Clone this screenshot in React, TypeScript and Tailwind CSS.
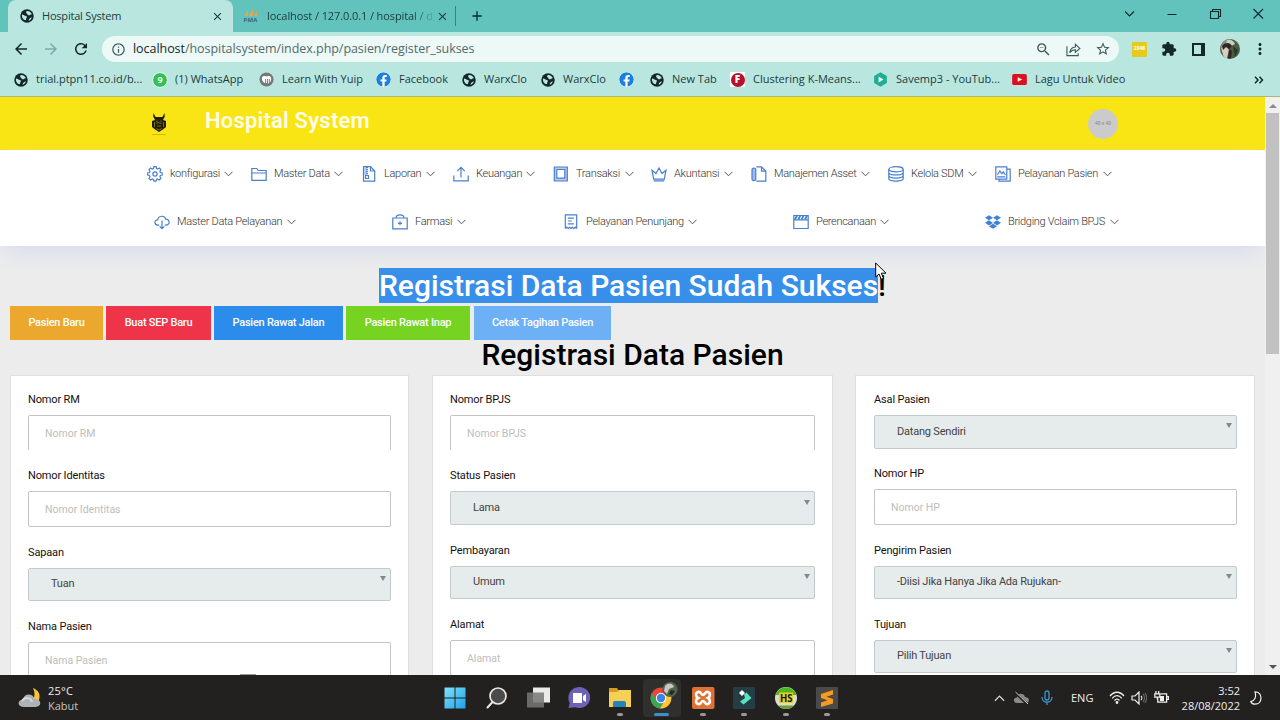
import React from 'react';
import { FaDropbox, FaFacebook } from 'react-icons/fa';
import { MdExtension, MdArrowBack, MdArrowForward, MdRefresh, MdInfoOutline, MdStarBorder, MdZoomOut, MdMoreVert, MdClose, MdAdd } from 'react-icons/md';

const Globe = () => (
  <svg viewBox="0 0 16 16" className="w-[14px] h-[14px] shrink-0">
    <circle cx="8" cy="8" r="7.7" fill="#15262a" />
    <path d="M2.2 6.2c2.2.2 3 1.5 4.6 1.7 1 .2 1.5.9.8 1.8-.7.8-.2 2.4-1.2 3.2-2.6-.6-4.6-3.2-4.2-6.7ZM8 2.2c2.4-.3 4.7 1.2 5.6 3.8-.8-.4-1.5.1-2.1.8-1 .9-3.1.3-3-.8.1-.9-1.4-.8-1.6-1.8-.1-.9.3-1.5 1.1-2ZM13.6 9.8c-.7 1.8-2 3-3.6 3.6-.2-1.2.7-1.7 1.3-2.7.5-.8 1.6-1 2.3-.9Z" fill="#b9e7e0" />
  </svg>
);

const Chevron = () => (
  <svg viewBox="0 0 9 6" className="w-[9px] h-[6px] shrink-0" fill="none" stroke="#555" strokeWidth="1">
    <path d="M.5 .8 4.5 4.8 8.5 .8" />
  </svg>
);

// line icons of the menu, all on a 16px grid
const shapes: Record<string, React.ReactNode> = {
  gear: (
    <>
      <path d="M6.9 .7h2.2l.4 1.8 1.2.5 1.6-1 1.6 1.6-1 1.6.5 1.3 1.8.4v2.2l-1.8.4-.5 1.2 1 1.6-1.6 1.6-1.6-1-1.2.5-.4 1.8H6.9l-.4-1.8-1.3-.5-1.6 1L2 12.3l1-1.6-.5-1.2-1.8-.4V6.9l1.8-.4L3 5.2 2 3.6 3.6 2l1.6 1 1.3-.5Z" />
      <circle cx="8" cy="8" r="2.1" />
    </>
  ),
  folder: <path d="M.8 14.3V2.5h5l1.4 2h8v9.8ZM.8 7h14.4" />,
  zip: (
    <>
      <path d="M2.5.7h7L13.7 5v10.2H2.5ZM9.5.7V5h4.2" />
      <path d="M3 1h3.500v8H3z" fill="#b5caf0" stroke="none" />
      <path d="M5 1.5h2M5 3.5h2M5 5.5h2M5 7.5h2M4.5 9.5h3v3h-3z" />
    </>
  ),
  upload: <path d="M.8 9.5v5.3h14.4V9.5M8 11.5V1.5M4.2 5.2 8 1.4l3.8 3.8" />,
  frame: (
    <>
      <path d="M1.3 1h13v14h-13z" fill="#b5caf0" />
      <path d="M3.8 3.5h8v8.700h-8z" fill="#fff" />
    </>
  ),
  crown: <path d="M2.7 13.2 1 4.2l4 3.3L8 2l3 5.5 4-3.3-1.7 9ZM2.7 14.8h10.6" />,
  files: (
    <>
      <path d="M5.3.8h5.2l4.3 4.3v10H5.3M10.5.8v4.3h4.3" />
      <path d="M1 3.5C1 1.5 4.8 1.5 4.8 3.5v9.7c0 2-3.8 2-3.8 0Z" fill="#9db9ee" />
    </>
  ),
  stack: (
    <>
      <ellipse cx="8" cy="3.3" rx="7.2" ry="2.6" />
      <path d="M.8 3.3v9.3c0 3.400 14.400 3.400 14.400 0V3.300M.8 6.400c0 3.400 14.400 3.400 14.400 0M.8 9.500c0 3.400 14.400 3.400 14.400 0" />
    </>
  ),
  image: <path d="M.8.8h11v12.400H.8ZM11.800 3.200h3.400v12H4v-2M2.300 10.800h8M2.500 9l2.300-4.200 2 3 1.500-2L10.500 9" />,
  cloud: <path d="M5.2 11.2H3.7C-.1 10.7.2 5.7 3.7 5.9 4.2 1.6 10.5.8 11.7 5.1c4.5-.2 4.6 6.1.2 6.1h-1.2M8 6.5v8.2M5.7 12.4 8 14.7l2.3-2.3" />,
  kit: <path d="M.8 4h14.4v10.8H.8ZM4 3.8C4.3-.1 11.7-.1 12 3.8M8 7.3v4M6 9.3h4" />,
  bill: <path d="M2.300 14.500V.8h11.400v13.700M2.300 14.500l1.400-1.300 1.500 1.500 1.400-1.500L8 14.700l1.400-1.500 1.400 1.500 1.500-1.500 1.400 1.300M4.800 4.200h6M4.800 7h4M4.800 9.800h6" />,
  clap: (
    <>
      <path d="M.8 1.5h14.4v13H.8ZM.8 5.900h14.400" />
      <path d="m2 5.5 2-4M5.300 5.500l2-4M8.600 5.500l2-4M12 5.500l2-4" strokeWidth="1.800" />
    </>
  ),
};

const MenuIcon = ({ name }: { name: string }) => {
  if (name === 'dropbox') return <FaDropbox className="w-4 h-4 text-[#3f83d8] shrink-0" />;
  return (
    <svg viewBox="0 0 16 16" className="w-4 h-4 shrink-0" fill="none" stroke="#4a7fcb" strokeWidth="1.2">
      {shapes[name]}
    </svg>
  );
};

const menuTop = [
  { label: 'konfigurasi', icon: 'gear', box: 'w-[104px]', text: 'w-[54px]' },
  { label: 'Master Data', icon: 'folder', box: 'w-[110px]', text: 'w-[60px]' },
  { label: 'Laporan', icon: 'zip', box: 'w-[92px]', text: 'w-[42px]' },
  { label: 'Keuangan', icon: 'upload', box: 'w-[100px]', text: 'w-[50px]' },
  { label: 'Transaksi', icon: 'frame', box: 'w-[98px]', text: 'w-[49px]' },
  { label: 'Akuntansi', icon: 'crown', box: 'w-[100px]', text: 'w-[50px]' },
  { label: 'Manajemen Asset', icon: 'files', box: 'w-[137px]', text: 'w-[87px]' },
  { label: 'Kelola SDM', icon: 'stack', box: 'w-[107px]', text: 'w-[57px]' },
  { label: 'Pelayanan Pasien', icon: 'image', box: 'w-[124px]', text: 'w-[85px]' },
];

const menuBottom = [
  { label: 'Master Data Pelayanan', icon: 'cloud', box: 'w-[238px]', text: 'w-[110px]' },
  { label: 'Farmasi', icon: 'kit', box: 'w-[171px]', text: 'w-[42px]' },
  { label: 'Pelayanan Penunjang', icon: 'bill', box: 'w-[230px]', text: 'w-[102px]' },
  { label: 'Perencanaan', icon: 'clap', box: 'w-[192px]', text: 'w-[64px]' },
  { label: 'Bridging Vclaim BPJS', icon: 'dropbox', box: 'w-[134px]', text: 'w-[102px]' },
];

type MenuEntry = { label: string; icon: string; box: string; text: string };

function MenuRow({ items }: { items: MenuEntry[] }) {
  return (
    <>
      {items.map((m) => (
        <div key={m.label} className={`flex items-center shrink-0 ${m.box}`}>
          <MenuIcon name={m.icon} />
          <span className={`ml-[7px] shrink-0 pt-px whitespace-nowrap text-[11px] font-light tracking-[-0.3px] text-[#333] ${m.text}`}>{m.label}</span>
          <Chevron />
        </div>
      ))}
    </>
  );
}

const bookmarks = [
  { label: 'trial.ptpn11.co.id/b...', icon: <Globe />, box: 'w-[139px]' },
  {
    label: '(1) WhatsApp',
    icon: (
      <span className="w-[14px] h-[14px] rounded-full bg-[#2fc350] text-white text-[9px] font-bold flex items-center justify-center outline-1 outline-[#d8f5e2] shrink-0">9</span>
    ),
    box: 'w-[106px]',
  },
  {
    label: 'Learn With Yuip',
    icon: (
      <svg viewBox="0 0 16 16" className="w-[15px] h-[15px] shrink-0">
        <circle cx="8" cy="8" r="7.5" fill="#777" />
        <path d="M3 6.5C4 3 7 4.5 8 4.5S12.500 3 13 7c0 2-.5 3-1.500 4.500V7.500h-1V12h-1V7.500h-1V12h-1V7.500h-1V12C4 11 3 9 3 6.500Z" fill="#fff" />
      </svg>
    ),
    box: 'w-[117px]',
  },
  { label: 'Facebook', icon: <FaFacebook className="w-[15px] h-[15px] text-[#1b7fdc] bg-white rounded-full shrink-0" />, box: 'w-[86px]' },
  { label: 'WarxClo', icon: <Globe />, box: 'w-[79px]' },
  { label: 'WarxClo', icon: <Globe />, box: 'w-[78px]' },
  { label: '', icon: <FaFacebook className="w-[15px] h-[15px] text-[#1b7fdc] bg-white rounded-full shrink-0" />, box: 'w-[31px]' },
  { label: 'New Tab', icon: <Globe />, box: 'w-[80px]' },
  {
    label: 'Clustering K-Means...',
    icon: (
      <span className="w-[15px] h-[15px] bg-white flex items-center justify-center shrink-0">
        <span className="w-[14px] h-[14px] rounded-full bg-[#b5122b] text-white text-[10px] font-extrabold flex items-center justify-center">F</span>
      </span>
    ),
    box: 'w-[143px]',
  },
  {
    label: 'Savemp3 - YouTub...',
    icon: (
      <svg viewBox="0 0 16 16" className="w-[15px] h-[15px] shrink-0">
        <path d="m8 .3 6.800 3.900v7.600L8 15.700l-6.800-3.900V4.200Z" fill="#1fae90" />
        <path d="m6 4.800 5 3.200-5 3.200Z" fill="#fff" />
      </svg>
    ),
    box: 'w-[139px]',
  },
  {
    label: 'Lagu Untuk Video',
    icon: (
      <svg viewBox="0 0 16 12" className="w-[15px] h-[11px] shrink-0">
        <rect width="16" height="12" rx="2" fill="#dd1021" />
        <path d="m6 3.500 5 2.500-5 2.500Z" fill="#fff" />
      </svg>
    ),
    box: 'w-[120px]',
  },
];

function BrowserChrome() {
  return (
    <div className="font-['Open_Sans','Noto_Sans',sans-serif] text-[#1c3a3c] shrink-0">
      <div className="h-8 bg-[#62c2bc] flex items-stretch pl-2">
        <div className="w-[225px] rounded-t-lg bg-[#b9e7e0] flex items-center pl-3 pr-[9px]">
          <Globe />
          <span className="ml-[8px] text-[11px] tracking-[-0.2px] flex-1 whitespace-nowrap">Hospital System</span>
          <MdClose className="w-[13px] h-[13px]" />
        </div>
        <div className="w-[224px] flex items-center pl-[10px]">
          <svg viewBox="0 0 16 16" className="w-4 h-4 shrink-0">
            <path d="M1 8 5 2v6ZM6 8 10 0v8ZM11 8l3-5v5Z" fill="#e3a84e" />
            <text x="0.500" y="14" fontSize="6" fontWeight="bold" fill="#46617c" textLength="14">PMA</text>
          </svg>
          <span className="ml-[8px] w-[168px] text-[11px] tracking-[-0.1px] whitespace-nowrap [mask-image:linear-gradient(to_right,black_145px,transparent_170px)]">localhost / 127.0.0.1 / hospital / d</span>
          <MdClose className="ml-[1px] w-[13px] h-[13px] shrink-0" />
          <span className="ml-[6px] h-[20px] border-l border-[#2f8580]" />
        </div>
        <MdAdd className="w-4 h-4 mt-2 ml-[12px] text-[#0e2a2c]" />
        <svg viewBox="0 0 140 14" className="ml-auto mr-[15px] mt-[7px] w-[140px] h-[14px]" fill="none" stroke="#0e2a2c" strokeWidth="1.100">
          <path d="m0 4.500 4.500 4.500 4.500-4.500M42.500 7.500h9M85.500 4.500h8v7h-8ZM87.500 4.500v-2h8v7h-2M128.500 2l9.500 9.500M138 2l-9.500 9.500" />
        </svg>
      </div>
      <div className="h-[34px] bg-[#b9e7e0] flex items-center">
        <MdArrowBack className="ml-3 w-[18px] h-[18px] text-[#14282a]" />
        <MdArrowForward className="ml-3 w-[18px] h-[18px] text-[#7fa9a5]" />
        <MdRefresh className="ml-3 w-[18px] h-[18px] text-[#14282a]" />
        <div className="ml-3 w-[1017px] h-[26px] rounded-full bg-[#edf9f7] flex items-center pl-[9px] text-[#3f5a5c]">
          <MdInfoOutline className="w-[15px] h-[15px]" />
          <span className="ml-[7px] pt-px text-[12.500px] tracking-[-0.05px] whitespace-nowrap text-[#526b6b] flex-1">
            <span className="text-[#12282a]">localhost</span>/hospitalsystem/index.php/pasien/register_sukses
          </span>
          <MdZoomOut className="w-[17px] h-[17px]" />
          <svg viewBox="0 0 16 16" className="ml-[14px] w-[15px] h-[15px]" fill="none" stroke="currentColor" strokeWidth="1.200">
            <path d="M1 4.500v10h12v-2.500M4 11.500C4.500 7.500 7 5.500 10 5.300V2.500l4.800 4.300L10 11V8.300c-2.500 0-4.500 1-6 3.200Z" />
          </svg>
          <MdStarBorder className="ml-[14px] mr-[8px] w-[16px] h-[16px]" />
        </div>
        <span className="ml-[13px] w-[15px] h-[15px] rounded-[1px] bg-[#e6cb1b] text-white text-[5px] font-bold flex items-center justify-center">2048</span>
        <MdExtension className="ml-[14px] w-4 h-4 text-[#14282a]" />
        <span className="ml-[15px] w-[13px] h-[13px] border-2 border-r-4 border-[#14282a]" />
        <svg viewBox="0 0 20 20" className="ml-[15px] w-5 h-5">
          <clipPath id="face"><circle cx="10" cy="10" r="10" /></clipPath>
          <g clipPath="url(#face)">
            <rect width="20" height="20" fill="#4c5c42" />
            <path d="M0 0h11L8 7 0 9Z" fill="#8f8a7c" />
            <path d="M1 9l5-2 3 4-2 8H4Z" fill="#d8ccc3" />
            <path d="M7 1c4-1 7 1 8 4l-6 3-4-1Z" fill="#c9d0bd" />
            <path d="M2 7c3-4 8-4 10 0l-3 3-3-2-3 3ZM9 10l3 2-1 7-3 1Z" fill="#2c2824" />
            <path d="M13 7l5 4-3 7Z" fill="#273c20" />
          </g>
        </svg>
        <MdMoreVert className="ml-[11px] w-[18px] h-[18px] text-[#14282a]" />
      </div>
      <div className="h-[30px] bg-[#b9e7e0] flex items-center pl-[14px] pb-[3px] text-[11px]">
        {bookmarks.map((b, i) => (
          <div key={i} className={`flex items-center gap-[8px] shrink-0 whitespace-nowrap ${b.box}`}>
            {b.icon}
            {b.label && <span>{b.label}</span>}
          </div>
        ))}
        <svg viewBox="0 0 10 8" className="ml-auto mr-[16px] w-[10px] h-[8px]" fill="none" stroke="#14282a" strokeWidth="1.500">
          <path d="m1 .8 3 3.200-3 3.200M5.500.8l3 3.200-3 3.200" />
        </svg>
      </div>
      <div className="h-px bg-[#a9b878]" />
    </div>
  );
}

const buttons = [
  { label: 'Pasien Baru', style: 'bg-[#eca72f] w-[93px]' },
  { label: 'Buat SEP Baru', style: 'bg-[#ef344a] w-[105px]' },
  { label: 'Pasien Rawat Jalan', style: 'bg-[#2c8cec] w-[129px]' },
  { label: 'Pasien Rawat Inap', style: 'bg-[#76d322] w-[124px]' },
  { label: 'Cetak Tagihan Pasien', style: 'bg-[#6db0f6] w-[137px] ml-px' },
];

const columns = [
  {
    box: 'w-[399px] pl-[17px] mr-px',
    fields: [
      { label: 'Nomor RM', placeholder: 'Nomor RM', open: true },
      { label: 'Nomor Identitas', placeholder: 'Nomor Identitas' },
      { label: 'Sapaan', value: 'Tuan' },
      { label: 'Nama Pasien', placeholder: 'Nama Pasien' },
    ],
  },
  {
    box: 'w-[401px] pl-[17px]',
    fields: [
      { label: 'Nomor BPJS', placeholder: 'Nomor BPJS', open: true },
      { label: 'Status Pasien', value: 'Lama' },
      { label: 'Pembayaran', value: 'Umum' },
      { label: 'Alamat', placeholder: 'Alamat' },
    ],
  },
  {
    box: 'w-[400px] pl-[18px]',
    fields: [
      { label: 'Asal Pasien', value: 'Datang Sendiri' },
      { label: 'Nomor HP', placeholder: 'Nomor HP' },
      { label: 'Pengirim Pasien', value: '-Diisi Jika Hanya Jika Ada Rujukan-' },
      { label: 'Tujuan', value: 'Pilih Tujuan' },
    ],
  },
];

type FieldData = { label: string; placeholder?: string; value?: string; open?: boolean };

function Field({ label, placeholder, value, open }: FieldData) {
  return (
    <div className={value ? 'h-[74.300px]' : 'h-[76.400px]'}>
      <div className="h-[17px] leading-[18px] mb-[7px] text-[11px] text-[#111] tracking-[-0.150px]">{label}</div>
      {value ? (
        <div className="h-[33.500px] rounded-[2px] border border-[#c3cacb] bg-[#e6ebeb] flex items-center pl-[22px] pr-[4px] text-[11px] tracking-[-0.200px] text-[#444]">
          <span className="flex-1">{value}</span>
          <span className="border-x-[3px] border-t-[5px] border-x-transparent border-t-[#888] mb-3" />
        </div>
      ) : (
        <div className={`h-9 rounded-[2px] border border-[#c4c4c4] flex items-center pt-px pl-4 text-[10.500px] text-[#bdbdbd] ${open ? 'border-b-white' : ''}`}>
          {placeholder}
        </div>
      )}
    </div>
  );
}

function HospitalPage() {
  return (
    <div className="w-[1265px] bg-[#ececec] font-[Roboto,sans-serif] overflow-hidden">
      <header className="h-[53px] bg-[#f9e414] flex items-center">
        <svg viewBox="0 0 16 24" className="ml-[151px] w-4 h-6">
          <path d="M2.500 1 4.500 5h7l2-4 .3 3.500L12 8l3 1v6l-2.500 2L8 20l-4.500-3L1 15V9l3-1-1.800-3.500Z" fill="#1f1c08" />
          <path d="M3.500 10v5M12.500 10v5M6 8.500v2M10 8.500v2M5.500 12l2-2 2 2 1-1M6 14h4M5.500 16.500l2.500 1.500 2.500-1.500" stroke="#a8980f" strokeWidth=".7" fill="none" />
          <path d="M1.500 22.500h13" stroke="#a08f12" strokeDasharray="1 1" />
        </svg>
        <span className="ml-[38px] mb-[6px] text-[22px] font-semibold text-[#fffde8] tracking-[0.200px]">Hospital System</span>
        <span className="ml-auto mr-[147px] w-[30px] h-[30px] rounded-full bg-[#cbcbcb] text-[#888] text-[5px] flex items-center justify-center">40 x 40</span>
      </header>
      <nav className="h-24 bg-white shadow-[0_10px_22px_-6px_#d3d8ef]">
        <div className="h-12 flex items-center pl-[147px]">
          <MenuRow items={menuTop} />
        </div>
        <div className="h-12 flex items-center pl-[154px]">
          <MenuRow items={menuBottom} />
        </div>
      </nav>
      <h1 className="mt-[22px] h-[35px] leading-[35px] text-center text-[30px] font-medium text-black">
        <span className="inline-block h-[35px] bg-[#388fea] text-white">Registrasi Data Pasien Sudah Sukses</span>!
      </h1>
      <div className="mt-[3px] ml-[10px] flex gap-[3px]">
        {buttons.map((b) => (
          <button key={b.label} className={`h-[34px] pt-px text-white text-[11px] font-medium tracking-[-0.250px] text-center whitespace-nowrap ${b.style}`}>
            {b.label}
          </button>
        ))}
      </div>
      <h2 className="h-[35px] leading-[30px] text-center text-[30px] font-medium text-black">Registrasi Data Pasien</h2>
      <div className="ml-[10px] flex gap-[22px]">
        {columns.map((c, i) => (
          <section key={i} className={`h-[400px] shrink-0 bg-white border border-[#dfdfdf] pr-[17px] pt-[15px] ${c.box}`}>
            {c.fields.map((f) => (
              <Field key={f.label} {...f} />
            ))}
          </section>
        ))}
      </div>
    </div>
  );
}

const apps = [
  {
    name: 'start',
    art: (
      <>
        <defs>
          <linearGradient id="win" x1="0" y1="0" x2="1" y2="1">
            <stop offset="0" stopColor="#7fe3fa" />
            <stop offset="1" stopColor="#1fa0ea" />
          </linearGradient>
        </defs>
        <path d="M1.500 1.500h10v10h-10zM12.500 1.500h10v10h-10zM1.500 12.500h10v10h-10zM12.500 12.500h10v10h-10z" fill="url(#win)" />
      </>
    ),
  },
  {
    name: 'search',
    art: (
      <>
        <circle cx="14" cy="10" r="8" fill="#4b4b4b" stroke="#e8e8e8" strokeWidth="1.700" />
        <path d="m8.500 16-5 5.500" stroke="#e8e8e8" strokeWidth="2" strokeLinecap="round" />
      </>
    ),
  },
  {
    name: 'tasks',
    art: (
      <>
        <path d="M7 1.500h17v15H7z" fill="#ebebeb" />
        <path d="M1 6.500h17v15H1z" fill="#777" opacity=".85" />
      </>
    ),
  },
  {
    name: 'chat',
    art: (
      <>
        <path d="M12 1a11 10.500 0 1 1-4 20.200L1.500 22l1.200-5A10.800 10.800 0 0 1 12 1Z" fill="#6c63b8" />
        <path d="M6 7h9v10H6zM16 10l3-2v8l-3-2z" fill="#fff" />
      </>
    ),
  },
  {
    name: 'files',
    dot: true,
    art: (
      <>
        <path d="M1 2h8l2 3h11v16H1z" fill="#d79a23" />
        <path d="M1 6h8l2-2h12v17H1z" fill="#f6cf56" />
        <path d="M5 21v-3c0-3 1-3 3-3h7c3 0 3 1 3 3v3z" fill="#2283bd" />
      </>
    ),
  },
  {
    name: 'chrome',
    art: (
      <>
        <circle cx="11" cy="12" r="10.500" fill="#e9463c" />
        <path d="M1.800 7A10.500 10.500 0 0 0 10 22.500l5-8.500-8 1Z" fill="#37a853" />
        <path d="M10 22.500A10.500 10.500 0 0 0 20.500 8H12l3 6Z" fill="#fbc934" />
        <circle cx="11" cy="12" r="5.200" fill="#fff" />
        <circle cx="11" cy="12" r="4.200" fill="#3f82e8" />
        <circle cx="20" cy="3.500" r="7.500" fill="#54624e" />
        <path d="M15 0c3-4 8-3 9 1l-5 2-2 5-3-3Z" fill="#c9c8c0" />
        <path d="m21 4 4 1-3 4-3-1Z" fill="#1f2b1d" />
      </>
    ),
  },
  {
    name: 'xampp',
    dot: true,
    art: (
      <>
        <rect x="1" y="1" width="22.500" height="22" rx="2" fill="#e07134" />
        <path d="M7 6c3-1 3 3 5 3s2-4 5-3 2 5 0 6c2 1 3 5 0 6s-3-3-5-3-2 4-5 3-2-5 0-6c-2-1-3-5 0-6Z" fill="none" stroke="#fff" strokeWidth="2.600" />
      </>
    ),
  },
  {
    name: 'filmora',
    dot: true,
    art: (
      <>
        <rect x="1" y="1" width="22" height="22" rx="1" fill="#253d45" />
        <path d="m12 8.500 2.500-2 5 5.500-8 6.500-3.500-3 5-3.500Z" fill="#55e6c1" />
        <path d="m10 4 3 3-3 3-3-3Z" fill="#fff" />
      </>
    ),
  },
  {
    name: 'hs',
    dot: true,
    art: (
      <>
        <circle cx="12" cy="12" r="11" fill="#d9dec9" />
        <path d="M1.500 9a11 11 0 0 1 21 0Z" fill="#4db81e" />
        <path d="M4 19.500a11 11 0 0 0 16 0Z" fill="#6fa02f" />
        <rect x="5" y="6.500" width="14" height="10.500" fill="#e8ce27" />
        <text x="6" y="16" fontSize="10.500" fontWeight="bold" fill="#151515" textLength="12.500" lengthAdjust="spacingAndGlyphs">HS</text>
      </>
    ),
  },
  {
    name: 'sublime',
    dot: true,
    art: (
      <>
        <rect x="1" y="1" width="22" height="22" rx="1" fill="#4a4a49" />
        <path d="M18 4v4.500l-6.500 2.300L18 13v4.500L6 21v-4.500l6.500-2.300L6 12V8Z" fill="#f79a1f" />
      </>
    ),
  },
];

function Taskbar() {
  return (
    <footer className="h-[45px] bg-[#22211f] text-[#eee] flex shrink-0 font-['Open_Sans','Noto_Sans',sans-serif]">
      <div className="w-[434.500px] flex items-center pl-[18px]">
        <svg viewBox="0 0 24 22" className="w-6 h-[22px]">
          <path d="M15 1c5 2 8 6 6 12h-6c2-4 2-8 0-12Z" fill="#f5c242" />
          <path d="M6 20c-7 0-7-7-1-7.500C6 6 15 6 16.500 12c7-1 8 8 1 8Z" fill="#aeb3b6" />
          <path d="M4 14c3-4 9-4 10 1" stroke="#d7dadc" strokeWidth="2" fill="none" />
        </svg>
        <div className="ml-[6px] text-[11px] leading-[15px]">
          <div className="tracking-[0.2px]">25°C</div>
          <div className="text-[#c4c4c4]">Kabut</div>
        </div>
      </div>
      {apps.map((a) => (
        <div key={a.name} className="w-[41.300px] shrink-0 flex flex-col items-center">
          <div className={`mt-[4px] w-[38px] h-[38px] rounded flex flex-col items-center ${a.name === 'chrome' ? 'bg-[#2f2f2e]' : ''}`}>
            <svg viewBox="0 0 24 24" className="mt-[7px] w-6 h-6 overflow-visible shrink-0">{a.art}</svg>
            {a.name === 'chrome' && <span className="mt-[3px] w-[15px] h-[3px] rounded-full bg-[#3d8fc9]" />}
            {a.dot && <span className="mt-[3px] w-[6px] h-[3px] rounded-full bg-[#999]" />}
          </div>
        </div>
      ))}
      <div className="ml-auto flex items-center pr-[18px] text-[11px]">
        <svg viewBox="0 0 12 8" className="w-[11px] h-[8px]" fill="none" stroke="#ddd" strokeWidth="1.300"><path d="m1 7 5-5 5 5" /></svg>
        <svg viewBox="0 0 16 14" className="ml-[8px] w-4 h-[14px]">
          <path d="M4 12C-.5 12 0 6.500 4 6.500 4 1.500 11 1.500 12 6c5 0 5 6 1 6Z" fill="#8a8a8a" />
          <path d="m1.500 1 12.500 12" stroke="#22211f" strokeWidth="2.500" />
          <path d="m2.500 1 12.500 12" stroke="#ccc" />
        </svg>
        <svg viewBox="0 0 12 16" className="ml-[12px] w-3 h-4" fill="none" stroke="#3e94cf" strokeWidth="1.300">
          <rect x="4" y="1" width="4" height="9" rx="2" />
          <path d="M1 7c0 7 10 7 10 0M6 12v3" />
        </svg>
        <span className="ml-[18px] w-[24px] pt-[2px]">ENG</span>
        <svg viewBox="0 0 16 13" className="ml-[14px] w-4 h-[13px]" fill="none" stroke="#eee" strokeWidth="1.300">
          <path d="M1 5c4-5 10-5 14 0M3.200 7.300c3-3.500 6.600-3.500 9.600 0M5.500 9.500c1.600-1.900 3.400-1.900 5 0" />
          <circle cx="8" cy="11.500" r=".8" fill="#eee" />
        </svg>
        <svg viewBox="0 0 16 14" className="ml-[6px] w-4 h-[14px]" fill="none" stroke="#eee" strokeWidth="1.200">
          <path d="M1 5h3l4-4v12l-4-4H1ZM10 5c1 1 1 3 0 4" />
          <path d="M12 3c2 2 2 6 0 8M14 2c2 3 2 7 0 10" stroke="#666" />
        </svg>
        <svg viewBox="0 0 16 14" className="ml-[7px] w-[15px] h-[13px]" fill="none" stroke="#eee" strokeWidth="1.400">
          <path d="M7 3h6.500v9H4V8M14 6h1.500v3H14M2 0v3M5 0v3M.8 3h5.400v3.500H.8ZM3.500 6v3" />
          <path d="M7 6h3v4H7z" fill="#eee" />
        </svg>
        <div className="ml-[9px] w-[62px] text-right text-[11px] leading-[15px]">
          <div>3:52</div>
          <div>28/08/2022</div>
        </div>
        <svg viewBox="0 0 12 14" className="ml-[10px] w-3 h-[14px]" fill="none" stroke="#eee" strokeWidth="1.200">
          <path d="M5 .8c8 0 8 12.400 0 12.400-2 0-3.500-1-4.200-2.500C5 9.500 6.500 6 5 .8Z" />
        </svg>
      </div>
    </footer>
  );
}

export default function App() {
  return (
    <div className="relative w-[1280px] h-[720px] flex flex-col overflow-hidden">
      <BrowserChrome />
      <div className="flex flex-1 min-h-0">
        <HospitalPage />
        <div className="w-[15px] bg-[#f0f0f0] flex flex-col items-center">
          <span className="mt-[7px] border-x-[4px] border-b-[4px] border-x-transparent border-b-[#8a8a8a]" />
          <span className="mt-[5px] w-[13px] h-[241px] bg-[#c1c1c1]" />
          <span className="mt-auto mb-[6px] border-x-[4px] border-t-[4px] border-x-transparent border-t-[#555]" />
        </div>
      </div>
      <Taskbar />
      <span className="absolute left-[240px] top-[674px] w-4 h-px bg-[#999]" />
      <svg viewBox="0 0 12 19" className="absolute left-[875px] top-[262px] w-3 h-[19px]">
        <path d="M.7 1v14l3.300-3 2.300 5.300 2.200-1L6.300 11.200H11Z" fill="#fff" stroke="#000" strokeWidth="1" />
      </svg>
    </div>
  );
}
